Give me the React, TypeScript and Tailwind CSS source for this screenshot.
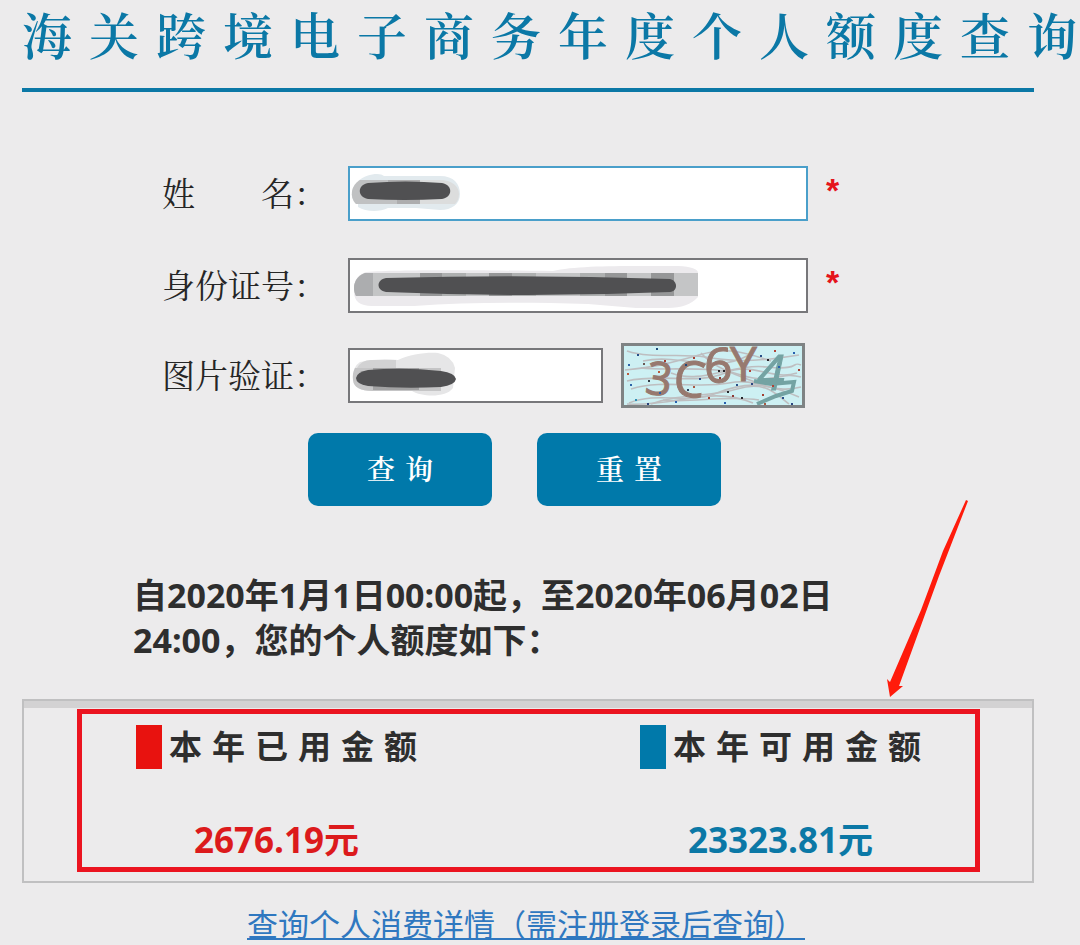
import { ReactNode, useState } from 'react';

const titleFont = 'font-["Noto_Serif_CJK_SC","Noto_Sans_CJK_SC",serif]';
const sansFont = 'font-["Open_Sans","Noto_Sans_CJK_SC",sans-serif]';

interface FieldProps {
  id: string;
  label: string;
  required?: boolean;
  children: ReactNode;
}

function Field({ id, label, required = false, children }: FieldProps) {
  return (
    <div className="flex items-center">
      <label
        htmlFor={id}
        className="w-[186px] shrink-0 whitespace-pre pb-1 text-[33px] leading-[44px] font-normal text-[#262626]"
      >
        {label}
      </label>
      {children}
      {required && (
        <span className="ml-[18px] pb-2 font-['Liberation_Sans',sans-serif] text-[34px] leading-[36px] font-bold text-[#e5141b]">*</span>
      )}
    </div>
  );
}

interface MaskedInputProps {
  id: string;
  className: string;
  mask: ReactNode;
}

function MaskedInput({ id, className, mask }: MaskedInputProps) {
  const [value, setValue] = useState('');

  return (
    <div className={`relative h-[55px] ${className}`}>
      <input
        id={id}
        type="text"
        value={value}
        onChange={(e) => setValue(e.target.value)}
        className="h-full w-full border-2 border-inherit bg-white px-2 text-[28px] outline-none"
      />
      <svg className="pointer-events-none absolute top-0 left-0" width="360" height="55" viewBox="0 0 360 55">
        {mask}
      </svg>
    </div>
  );
}

const nameMask = (
  <>
    <path d="M10 15C18 8 32 6 36 10H92C106 10 112 18 112 28S104 44 92 44L68 42L40 42C32 46 18 46 10 41Z" fill="#e2eaee" />
    <path d="M12 14H92C103 14 111 20 111 28C111 33 109 36 107 38H8C1 31 3 19 12 14Z" fill="#dcdddd" />
    <path d="M12 14H52V38H8C1 31 3 19 12 14Z" fill="#c0c1c2" />
    <path d="M40 14H72V38H49V32H40Z" fill="#adadae" />
    <path d="M20 17Q58 14 94 17C105 19 105 31 94 33Q56 35 20 33C9 31 9 19 20 17Z" fill="#505052" />
  </>
);

const idMask = (
  <>
    <path
      d="M18 14C50 12 100 12 205 13C230 7 280 8 330 8Q350 9 350 15V39Q340 50 320 50H288L240 46C180 44 120 44 66 48H24C12 48 6 43 6 34V27Q8 17 18 14Z"
      fill="#eceaed"
    />
    <path d="M17 15H350V38H8C3 28 8 18 17 15Z" fill="#c4c5c6" />
    <path d="M17 15H25V38H8C3 28 8 18 17 15Z" fill="#acadaf" />
    <path d="M72 15H94V38H72ZM141 15H164V38H141ZM257 15H279V38H257ZM303 15H326V38H303Z" fill="#969798" />
    <path d="M94 15H118V38H94ZM164 15H188V38H164ZM232 15H257V38H232Z" fill="#aeb0b0" />
    <path d="M38 20Q180 16 322 21C330 23 330 33 322 34Q180 40 38 34C28 32 28 22 38 20Z" fill="#505052" />
  </>
);

const codeMask = (
  <>
    <path d="M12 14Q30 10 50 12C62 6 80 4 90 5Q104 8 107 20L105 40C98 50 74 49 64 43L20 43Q6 41 5 32Q4 19 12 14Z" fill="#e6e6e7" />
    <path d="M9 20Q14 11 25 12L48 12V20Z" fill="#d2d2d3" />
    <path d="M7 20H93V43H25Q6 43 5 32Q4 26 7 20Z" fill="#c5c5c6" />
    <path d="M25 20H71V42H25Z" fill="#a2a2a3" />
    <path d="M20 22Q56 19 93 23Q107 25 108 31Q107 37 93 39Q55 41 20 38Q8 36 8 30Q9 24 20 22Z" fill="#505052" />
  </>
);

// [x, y, colour] of every speck on the verification image
const specks: Array<[number, number, string]> = [
  [7, 21, '#2c62a8'], [16, 11, '#274f88'], [22, 20, '#6b5a56'], [35, 5, '#1d4d7d'], [37, 28, '#b95a3c'],
  [9, 41, '#2c62a8'], [27, 37, '#303a44'], [14, 56, '#2e8fb5'], [26, 60, '#27427a'], [38, 49, '#2761b0'],
  [43, 17, '#a33f31'], [64, 21, '#214a7a'], [72, 14, '#a33f31'], [78, 35, '#2b4680'], [72, 43, '#a75943'],
  [66, 46, '#2d405e'], [87, 54, '#a33f31'], [54, 58, '#2761b0'], [97, 27, '#26262b'], [102, 27, '#26262b'],
  [98, 34, '#8c3a34'], [106, 48, '#26262b'], [111, 52, '#8c3a34'], [115, 41, '#274f88'], [103, 59, '#2761b0'],
  [120, 54, '#26262b'], [130, 40, '#2b4680'], [128, 27, '#b04437'], [139, 12, '#274f88'], [146, 16, '#26262b'],
  [153, 7, '#b04437'], [157, 23, '#2761b0'], [151, 42, '#b04437'], [161, 54, '#274f88'], [172, 9, '#2761b0'],
  [177, 26, '#a33f31'], [170, 60, '#2b4680'], [141, 51, '#a33f31'], [143, 60, '#a75943'], [6, 30, '#b95a3c'],
];

function VerifyImage() {
  return (
    <svg className="overflow-visible" width="184" height="65" viewBox="0 0 184 65" role="img" aria-label="图片验证码">
      <rect x="1" y="1" width="182" height="63" fill="#cdf0f3" />
      <g fill="none" stroke="#b9aeb0" strokeWidth="1.6" opacity="0.75">
        <path d="M6 8C30 16 60 10 84 14S130 20 178 12" />
        <path d="M4 27C34 24 50 20 78 12S120 8 150 18" />
        <path d="M20 25C50 28 90 22 120 32S160 28 180 34" />
        <path d="M6 38C40 30 76 42 104 30S150 38 176 30" />
        <path d="M10 46C42 36 78 46 108 40S150 52 180 44" />
        <path d="M8 60C38 48 66 62 96 50S146 40 178 54" />
        <path d="M30 61C60 50 90 54 116 46S152 48 168 61" />
        <path d="M42 57C72 60 104 52 138 57" />
        <path d="M50 30C80 42 112 20 146 24S170 18 180 22" />
        <path d="M80 10C92 24 110 30 142 42" />
        <path d="M22 18C60 10 92 32 128 12" />
        <path d="M6 61C56 64 88 42 132 60" />
      </g>
      <g className="font-['Open_Sans',sans-serif]" fill="#97796f" stroke="#97796f">
        <text x="23" y="50" fontSize="46" transform="rotate(8 23 50)">3</text>
        <text x="51" y="52" fontSize="50" transform="rotate(6 51 52)">C</text>
        <text x="83" y="40" fontSize="50">6</text>
        <text x="109" y="38" fontSize="48">Y</text>
        <text x="136" y="47" fontSize="50" fontStyle="italic" fill="#74a3a3" stroke="#74a3a3">4</text>
      </g>
      <path d="M133 38L150 41L173 39L171 48L155 53L136 61" fill="none" stroke="#74a3a3" strokeWidth="4" />
      {specks.map(([x, y, color], i) => (
        <rect key={i} x={x} y={y} width="2" height="2" fill={color} />
      ))}
      <rect x="1.5" y="1.5" width="181" height="62" fill="none" stroke="#7f8384" strokeWidth="3" />
    </svg>
  );
}

interface AmountProps {
  label: string;
  amount: string;
  swatch: string;
  color: string;
}

function Amount({ label, amount, swatch, color }: AmountProps) {
  return (
    <div className="w-1/2 shrink-0">
      <div className="flex items-center gap-[7px]">
        <span className={`h-11 w-[26px] ${swatch}`} />
        <span className="text-[33px] leading-[44px] font-bold tracking-[10px] whitespace-nowrap text-[#2e2e2e]">
          {label}
        </span>
      </div>
      <p className={`mt-[49px] text-[35px] leading-[44px] font-bold ${color}`}>{amount}</p>
    </div>
  );
}

export default function App() {
  const buttonClass =
    'h-[73px] w-[184px] rounded-[10px] bg-[#0079aa] pb-1 pl-[10px] text-[28px] font-semibold tracking-[10px] text-white';

  return (
    <main className={`min-h-screen overflow-hidden bg-[#ecebec] pr-[46px] pl-[22px] ${sansFont}`}>
      <h1
        className={`h-[92px] border-b-4 border-[#0b78a6] text-[50px] leading-[66px] font-semibold tracking-[17px] whitespace-nowrap text-[#0b78a6] ${titleFont}`}
      >
        海关跨境电子商务年度个人额度查询
      </h1>

      <form className={`pt-[74px] pl-[140px] ${titleFont}`} onSubmit={(e) => e.preventDefault()}>
        <Field id="name" label="姓　　名：" required>
          <MaskedInput id="name" className="w-[460px] border-[#4a9fca]" mask={nameMask} />
        </Field>
        <div className="mt-[37px]">
          <Field id="id-number" label="身份证号：" required>
            <MaskedInput id="id-number" className="w-[460px] border-[#77777a]" mask={idMask} />
          </Field>
        </div>
        <div className="mt-[30px]">
          <Field id="code" label="图片验证：">
            <MaskedInput id="code" className="w-[255px] border-[#77777a]" mask={codeMask} />
            <div className="ml-[18px]">
              <VerifyImage />
            </div>
          </Field>
        </div>
        <div className="mt-[25px] ml-[146px] flex gap-[45px]">
          <button type="submit" className={buttonClass}>查询</button>
          <button type="reset" className={buttonClass}>重置</button>
        </div>
      </form>

      <p className="mt-[67px] ml-[111px] max-w-[716px] text-[34px] leading-[45px] font-bold text-[#2e2e2e]">
        自2020年1月1日00:00起，至2020年06月02日24:00，您的个人额度如下：
      </p>

      <section className="relative mt-9 h-[184px] border-2 border-[#c0c0c1]">
        <div className="h-[7px] bg-[#d3d2d3]" />
        <div className="flex pt-[17px] pl-[112px]">
          <Amount
            label="本年已用金额"
            amount="2676.19元"
            swatch="bg-[#e8120f]"
            color="pl-[58px] text-[#dc1a1c]"
          />
          <div className="w-14 shrink-0" />
          <Amount
            label="本年可用金额"
            amount="23323.81元"
            swatch="bg-[#0079aa]"
            color="pl-12 text-[#0b78a6]"
          />
        </div>

        {/* Highlight frame and arrow */}
        <div className="pointer-events-none absolute top-2 right-[52px] bottom-[9px] left-[53px] border-5 border-[#eb1420]" />
        <svg
          className="pointer-events-none absolute right-[62px] bottom-full mb-[3px]"
          width="84"
          height="200"
          viewBox="0 0 84 200"
          fill="#ff1b0b"
        >
          <path d="M80 2L82 3L53 78L13 188L17 188L4 199L1 181L4 184L35 112L57 53Z" />
        </svg>
      </section>

      <div className="mt-[19px] ml-[225px]">
        <a
          href="#detail"
          className="text-[31px] leading-[44px] whitespace-nowrap text-[#2f78c0] underline decoration-2 underline-offset-2"
        >
          查询个人消费详情（需注册登录后查询）
        </a>
      </div>
    </main>
  );
}
